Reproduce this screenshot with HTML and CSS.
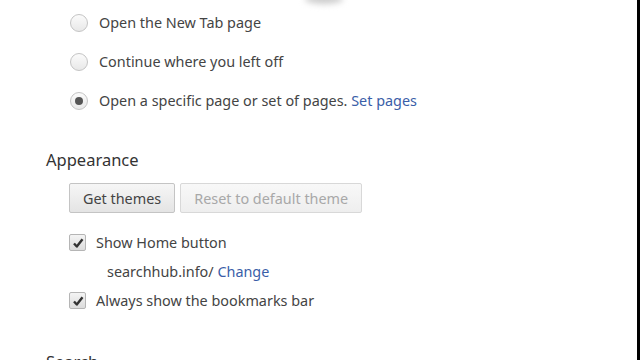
FILE: index.html
```html
<!DOCTYPE html>
<html lang="en">
<head>
  <meta charset="UTF-8" />
  <title>Settings</title>
  <link rel="stylesheet" href="styles.css">
</head>
<body>
  <div class="cursor-blur"></div>
  <div class="page">
    <div class="options">
      <label class="row"><span class="radio"></span>Open the New Tab page</label>
      <label class="row"><span class="radio"></span>Continue where you left off</label>
      <label class="row"><span class="radio checked"></span>Open a specific page or set of pages.&nbsp;<a href="#">Set pages</a></label>
    </div>

    <h2>Appearance</h2>
    <div class="buttons">
      <button class="btn">Get themes</button>
      <button class="btn disabled">Reset to default theme</button>
    </div>
    <div class="checks">
      <label class="check-row"><span class="checkbox">
        <svg width="12" height="12" viewBox="0 0 12 12"><path d="M2 6.5 L4.8 9.5 L10.5 2.2" fill="none" stroke="#333" stroke-width="2.4" stroke-linejoin="round"/></svg>
      </span>Show Home button</label>
      <div class="home-url">searchhub.info/&nbsp;<a href="#">Change</a></div>
      <label class="check-row"><span class="checkbox">
        <svg width="12" height="12" viewBox="0 0 12 12"><path d="M2 6.5 L4.8 9.5 L10.5 2.2" fill="none" stroke="#333" stroke-width="2.4" stroke-linejoin="round"/></svg>
      </span>Always show the bookmarks bar</label>
    </div>

    <h2 class="search">Search</h2>
  </div>
  <div class="edge"></div>
</body>
</html>
```

FILE: styles.css
```css
body {
  margin: 0;
  background: #fff;
  font-family: 'Noto Sans', 'Open Sans', sans-serif;
  color: #444;
  overflow: hidden;
  height: 360px;
}

.page {
  padding: 3px 0 0 46px;
}

.options {
  padding-left: 24px;
}

.row {
  display: flex;
  align-items: center;
  height: 39px;
  font-size: 14.4px;
}

.radio {
  width: 18px;
  height: 18px;
  box-sizing: border-box;
  border-radius: 50%;
  border: 1px solid #c4c4c4;
  background: linear-gradient(#fbfbfb, #e8e8e8);
  margin-right: 11px;
  position: relative;
}

.radio.checked::after {
  content: "";
  position: absolute;
  top: 4px;
  left: 4px;
  width: 8px;
  height: 8px;
  border-radius: 50%;
  background: #555;
}

a {
  color: #3a5ea8;
  text-decoration: none;
}

h2 {
  font-weight: normal;
  font-size: 16.5px;
  color: #333;
  margin: 28px 0 0;
  line-height: 24px;
}

.buttons {
  display: flex;
  gap: 5px;
  margin: 11px 0 0 23px;
}

.btn {
  font-family: inherit;
  font-size: 14.4px;
  height: 30px;
  padding: 0 13px;
  border: 1px solid #c4c4c4;
  border-radius: 2px;
  background: linear-gradient(#f6f6f6, #e4e4e4);
  color: #444;
}

.btn.disabled {
  color: #a8a8a8;
  border-color: #d8d8d8;
  background: linear-gradient(#f8f8f8, #eeeeee);
}

.checks {
  margin: 15px 0 0 23px;
}

.check-row {
  display: flex;
  align-items: center;
  height: 29px;
  font-size: 14.4px;
}

.checkbox {
  width: 15px;
  height: 15px;
  border: 1px solid #b5b5b5;
  border-radius: 2px;
  background: linear-gradient(#f4f4f4, #dcdcdc);
  margin-right: 10px;
  display: flex;
  align-items: center;
  justify-content: center;
}

.home-url {
  height: 29px;
  line-height: 29px;
  padding-left: 38px;
  font-size: 14.4px;
}

h2.search {
  margin-top: 35px;
}

.cursor-blur {
  position: absolute;
  top: -6px;
  left: 305px;
  width: 38px;
  height: 10px;
  border-radius: 50%;
  background: #ccc;
  filter: blur(3px);
}

.edge {
  position: absolute;
  top: 0;
  right: 0;
  width: 3px;
  height: 360px;
  background: #000;
}
```
